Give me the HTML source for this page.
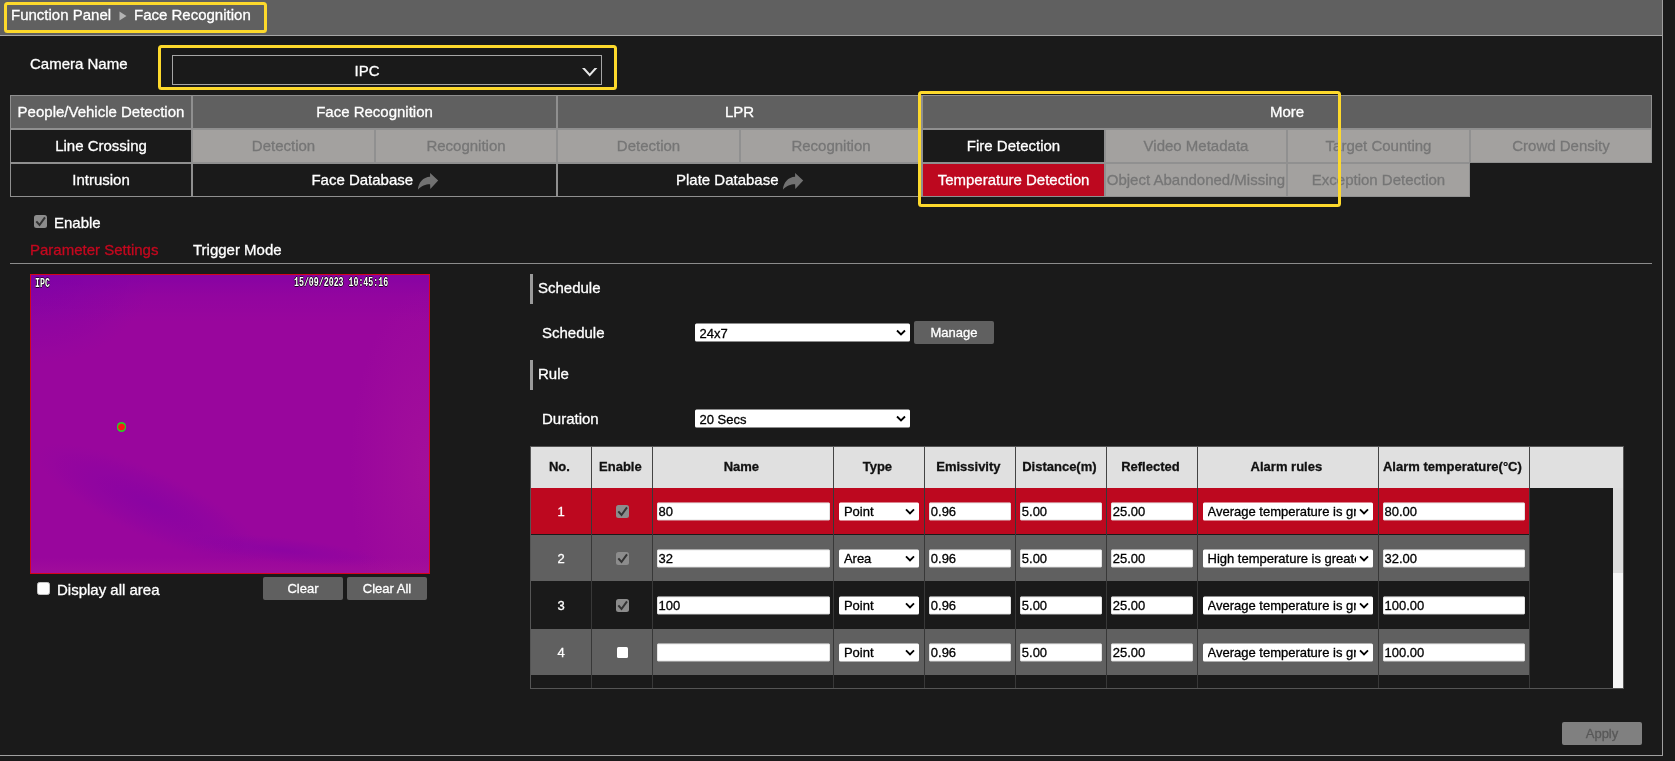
<!DOCTYPE html>
<html lang="en">
<head>
<meta charset="utf-8">
<title>Face Recognition - Temperature Detection</title>
<style>
*{box-sizing:border-box;margin:0;padding:0}
html,body{width:1675px;height:761px;overflow:hidden;background:#1a1a1a}
#root{position:absolute;left:0;top:0;width:1675px;height:761px;will-change:transform}
body{font-family:"Liberation Sans",Arial,sans-serif;font-size:15px;color:#fff;position:relative;-webkit-text-stroke:0.3px currentColor}
.abs{position:absolute}
#frame{position:absolute;left:0;top:0;width:1663px;height:756px;border-right:1px solid #a0a0a0;border-bottom:1px solid #a0a0a0}
#topbar{position:absolute;left:0;top:0;width:1662px;height:36px;background:#606060;border-bottom:1px solid #a6a6a6}
.hl{position:absolute;border:3px solid #fdd92c;border-radius:3.5px;pointer-events:none}
.t{position:absolute;white-space:nowrap;line-height:18px}
.cell{position:absolute;height:34px;border:1px solid #8f8f8f;text-align:center;line-height:32px;white-space:nowrap;overflow:hidden;font-size:15px}
.arr{position:absolute;left:224.3px;top:8px}
.hd{background:#606060;color:#fff}
.dk{background:#1a1a1a;color:#fff}
.ds{background:#a3a19f;color:#767676;border-color:#909090}
.sel{background:#bd081f;color:#fff}
.btn{position:absolute;height:23px;width:80px;background:#606060;color:#fff;font-size:13px;line-height:23px;text-align:center;border-radius:2px}
.cb{position:absolute;width:13px;height:13px;border-radius:2.5px}
.cb.on{background:#8c8c8c}
.cb svg{display:block}
.cb.off{background:#fff;border:1px solid #c4c4c4}
.secbar{position:absolute;width:3px;height:30px;background:#9a9a9a}
.selbox{position:absolute;height:18px;background:#fff;border-radius:1.5px;color:#000;font-size:13px;line-height:19px;padding-left:4.5px;white-space:nowrap;overflow:hidden}
.selbox svg{position:absolute;right:4px;top:6px}
.inp{position:absolute;height:18px;background:#fff;border:1px solid #e4e4e4;border-radius:1px;color:#000;font-size:13px;line-height:17px;padding-left:0.5px;white-space:nowrap;overflow:hidden}

.rh{position:absolute;background:#e0e0e0}
.rht{position:absolute;top:0;height:41px;line-height:39px;transform:translateX(-1.6px);text-align:center;color:#111;font-weight:bold;font-size:13px;white-space:nowrap}
.vs{position:absolute;width:1px;background:#383838}
.rr{position:absolute;left:0;width:998px}
.rr .inp,.rr .selbox{transform:translateY(.45px)}
.r1{background:#bd081f}.r2{background:#606060}.r3{background:#1a1a1a}
.rn{position:absolute;top:1px;height:46px;line-height:46px;text-align:center;font-size:13px;color:#fff}
.cb.off2{background:#fff;width:11px;height:11px;border-radius:1.5px}
.clip{display:block;width:148px;overflow:hidden;white-space:nowrap}
.osd{font-family:"Liberation Mono",monospace;font-weight:bold;font-size:13px;line-height:14px;color:#fff;white-space:pre;transform-origin:0 0;transform:scaleX(.635);-webkit-text-stroke:0;text-shadow:-1px 0 rgba(0,0,0,.75),1px 0 rgba(0,0,0,.75),0 -1px rgba(0,0,0,.6),0 1px rgba(0,0,0,.75)}
</style>
</head>
<body>
<div id="root">
<div id="frame"></div>
<div id="topbar"></div>
<div class="t" style="left:11px;top:6px">Function Panel</div>
<svg class="abs" style="left:118.5px;top:10.5px" width="8" height="10" viewBox="0 0 8 10"><path d="M0.5 0.5 L7.5 5 L0.5 9.5 Z" fill="#b4b4b4"/></svg>
<div class="t" style="left:134px;top:6px">Face Recognition</div>

<div class="t" style="left:30px;top:55px">Camera Name</div>
<div class="abs" style="left:172px;top:55px;width:430px;height:30px;border:1px solid #a6a6a6;text-align:center;line-height:29px;font-size:15px;padding-right:40px">IPC</div>
<svg class="abs" style="left:581.8px;top:67.8px" width="16" height="9" viewBox="0 0 16 9"><path d="M0 0 L2.8 0 L7.7 5.5 L12.6 0 L15.4 0 L7.7 8.6 Z" fill="#e8e8e8"/></svg>

<!-- tab grid -->
<div id="tabs">
<div class="cell hd" style="left:10px;top:95px;width:182px">People/Vehicle Detection</div>
<div class="cell hd" style="left:192px;top:95px;width:365px">Face Recognition</div>
<div class="cell hd" style="left:557px;top:95px;width:365px">LPR</div>
<div class="cell hd" style="left:922px;top:95px;width:730px">More</div>

<div class="cell dk" style="left:10px;top:129px;width:182px">Line Crossing</div>
<div class="cell ds" style="left:192px;top:129px;width:183px">Detection</div>
<div class="cell ds" style="left:375px;top:129px;width:182px">Recognition</div>
<div class="cell ds" style="left:557px;top:129px;width:183px">Detection</div>
<div class="cell ds" style="left:740px;top:129px;width:182px">Recognition</div>
<div class="cell dk" style="left:922px;top:129px;width:183px">Fire Detection</div>
<div class="cell ds" style="left:1105px;top:129px;width:182px">Video Metadata</div>
<div class="cell ds" style="left:1287px;top:129px;width:183px">Target Counting</div>
<div class="cell ds" style="left:1470px;top:129px;width:182px">Crowd Density</div>

<div class="cell dk" style="left:10px;top:163px;width:182px">Intrusion</div>
<div class="cell dk" style="left:192px;top:163px;width:365px;padding-right:24.5px">Face Database<svg class="arr" width="22" height="19" viewBox="0 0 22 19"><path d="M13.1 1.1 L21.2 8.6 L13.3 17 L13.1 12.3 C9 12.2 4.5 13.5 0.9 17.8 C1.5 10.5 6 5.2 13.1 4.8 Z" fill="#727272"/></svg></div>
<div class="cell dk" style="left:557px;top:163px;width:365px;padding-right:24.5px">Plate Database<svg class="arr" width="22" height="19" viewBox="0 0 22 19"><path d="M13.1 1.1 L21.2 8.6 L13.3 17 L13.1 12.3 C9 12.2 4.5 13.5 0.9 17.8 C1.5 10.5 6 5.2 13.1 4.8 Z" fill="#727272"/></svg></div>
<div class="cell sel" style="left:922px;top:163px;width:183px">Temperature Detection</div>
<div class="cell ds" style="left:1105px;top:163px;width:182px">Object Abandoned/Missing</div>
<div class="cell ds" style="left:1287px;top:163px;width:183px">Exception Detection</div>
</div>

<!-- enable / sub tabs -->
<div class="cb on" style="left:34px;top:215px"><svg width="13" height="13" viewBox="0 0 13 13"><path d="M2.3 6.3 L5.5 10 L11 2.3" fill="none" stroke="#333" stroke-width="2"/></svg></div>
<div class="t" style="left:54px;top:214px">Enable</div>
<div class="t" style="left:30px;top:241px;color:#c4081f">Parameter Settings</div>
<div class="t" style="left:193px;top:241px">Trigger Mode</div>
<div class="abs" style="left:10px;top:263px;width:1642px;height:1px;background:#8c8c8c"></div>

<!-- video -->
<div class="abs" id="video" style="left:30px;top:274px;width:400px;height:300px;border:1px solid #d4061c;background:#99069d;overflow:hidden">
  <div class="abs" style="left:0;top:0;width:398px;height:298px;background:
    linear-gradient(to bottom,rgba(120,0,168,.55) 0%,rgba(120,0,168,.2) 7%,rgba(120,0,168,0) 16%),
    radial-gradient(ellipse 30% 30% at 0% 0%,rgba(110,0,175,.45) 0%,rgba(110,0,175,0) 100%),
    radial-gradient(ellipse 20% 62% at 100% 66%,rgba(180,30,150,.38) 0%,rgba(180,30,150,0) 100%),
    linear-gradient(to top,rgba(175,25,150,.35) 0%,rgba(175,25,150,0) 5%)"></div>
  <div class="abs" style="left:-6px;top:196px;width:250px;height:66px;transform:rotate(25deg);background:radial-gradient(ellipse closest-side,rgba(118,0,170,.42) 0%,rgba(118,0,170,.22) 55%,rgba(118,0,170,0) 100%)"></div>
  <div class="abs" style="left:150px;top:262px;width:200px;height:26px;transform:rotate(6deg);background:radial-gradient(ellipse closest-side,rgba(118,0,170,.35) 0%,rgba(118,0,170,0) 100%)"></div>
  <div class="abs osd" style="left:4px;top:2px">IPC</div>
  <div class="abs osd" style="left:263px;top:1px">15/09/2023 10:45:16</div>
  <div class="abs" style="left:85.5px;top:147px;width:9.6px;height:9.6px;border-radius:50%;background:radial-gradient(circle closest-side,#ff1414 0%,#ff1414 66%,#22d422 84%,#22d422 100%)"></div>
</div>
<div class="cb off" style="left:37px;top:582px"></div>
<div class="t" style="left:57px;top:581px">Display all area</div>
<div class="btn" style="left:263px;top:577px">Clear</div>
<div class="btn" style="left:347px;top:577px">Clear All</div>

<!-- right panel -->
<div class="secbar" style="left:530px;top:274px"></div>
<div class="t" style="left:538px;top:279px">Schedule</div>
<div class="t" style="left:542px;top:324px">Schedule</div>
<div class="selbox" style="left:695px;top:323px;width:215px;transform:translateY(.5px)">24x7<svg width="10" height="7" viewBox="0 0 10 7"><path d="M1 1 L5 5 L9 1" fill="none" stroke="#000" stroke-width="1.8"/></svg></div>
<div class="btn" style="left:914px;top:321px">Manage</div>
<div class="secbar" style="left:530px;top:360px"></div>
<div class="t" style="left:538px;top:365px">Rule</div>
<div class="t" style="left:542px;top:410px">Duration</div>
<div class="selbox" style="left:695px;top:409px;width:215px;transform:translateY(.5px)">20 Secs<svg width="10" height="7" viewBox="0 0 10 7"><path d="M1 1 L5 5 L9 1" fill="none" stroke="#000" stroke-width="1.8"/></svg></div>

<!-- rule table placeholder -->
<div id="rules" style="position:absolute;left:530px;top:446px;width:1094px;height:243px;border:1px solid #555;overflow:hidden">
<div class="rh" style="left:0;top:0;width:1093px;height:41px"></div>
<div class="rht" style="left:0px;width:60px">No.</div>
<div class="rht" style="left:61px;width:60px">Enable</div>
<div class="rht" style="left:122px;width:180px">Name</div>
<div class="rht" style="left:303px;width:90px">Type</div>
<div class="rht" style="left:394px;width:90px">Emissivity</div>
<div class="rht" style="left:485px;width:90px">Distance(m)</div>
<div class="rht" style="left:576px;width:90px">Reflected</div>
<div class="rht" style="left:667px;width:180px">Alarm rules</div>
<div class="rht" style="left:848px;width:150px">Alarm temperature(°C)</div>
<div class="vs" style="left:60px;top:0;height:41px;background:#444"></div>
<div class="vs" style="left:121px;top:0;height:41px;background:#444"></div>
<div class="vs" style="left:302px;top:0;height:41px;background:#444"></div>
<div class="vs" style="left:393px;top:0;height:41px;background:#444"></div>
<div class="vs" style="left:484px;top:0;height:41px;background:#444"></div>
<div class="vs" style="left:575px;top:0;height:41px;background:#444"></div>
<div class="vs" style="left:666px;top:0;height:41px;background:#444"></div>
<div class="vs" style="left:847px;top:0;height:41px;background:#444"></div>
<div class="vs" style="left:998px;top:0;height:41px;background:#444"></div>
<div class="rr r1" style="top:41px;height:46px">
<div class="rn" style="left:0;width:60px">1</div>
<div class="cb on" style="left:85px;top:17px"><svg width="13" height="13" viewBox="0 0 13 13"><path d="M2.3 6.3 L5.5 10 L11 2.3" fill="none" stroke="#333" stroke-width="2"/></svg></div>
<div class="inp" style="left:126px;top:14px;width:172.6px">80</div>
<div class="selbox" style="left:308.4px;top:14px;width:79.2px">Point<svg width="10" height="7" viewBox="0 0 10 7"><path d="M1 1 L5 5 L9 1" fill="none" stroke="#000" stroke-width="1.8"/></svg></div>
<div class="inp" style="left:398.29999999999995px;top:14px;width:81.4px">0.96</div>
<div class="inp" style="left:489.29999999999995px;top:14px;width:81.4px">5.00</div>
<div class="inp" style="left:580.3px;top:14px;width:81.4px">25.00</div>
<div class="selbox" style="left:672px;top:14px;width:170px"><span class="clip">Average temperature is gr</span><svg width="10" height="7" viewBox="0 0 10 7"><path d="M1 1 L5 5 L9 1" fill="none" stroke="#000" stroke-width="1.8"/></svg></div>
<div class="inp" style="left:852px;top:14px;width:142px">80.00</div>
<div class="vs" style="left:60px;top:0;height:47px"></div>
<div class="vs" style="left:121px;top:0;height:47px"></div>
<div class="vs" style="left:302px;top:0;height:47px"></div>
<div class="vs" style="left:393px;top:0;height:47px"></div>
<div class="vs" style="left:484px;top:0;height:47px"></div>
<div class="vs" style="left:575px;top:0;height:47px"></div>
<div class="vs" style="left:666px;top:0;height:47px"></div>
<div class="vs" style="left:847px;top:0;height:47px"></div>
<div class="vs" style="left:998px;top:0;height:47px"></div>
</div>
<div class="rr r2" style="top:88px;height:46px">
<div class="rn" style="left:0;width:60px">2</div>
<div class="cb on" style="left:85px;top:17px"><svg width="13" height="13" viewBox="0 0 13 13"><path d="M2.3 6.3 L5.5 10 L11 2.3" fill="none" stroke="#333" stroke-width="2"/></svg></div>
<div class="inp" style="left:126px;top:14px;width:172.6px">32</div>
<div class="selbox" style="left:308.4px;top:14px;width:79.2px">Area<svg width="10" height="7" viewBox="0 0 10 7"><path d="M1 1 L5 5 L9 1" fill="none" stroke="#000" stroke-width="1.8"/></svg></div>
<div class="inp" style="left:398.29999999999995px;top:14px;width:81.4px">0.96</div>
<div class="inp" style="left:489.29999999999995px;top:14px;width:81.4px">5.00</div>
<div class="inp" style="left:580.3px;top:14px;width:81.4px">25.00</div>
<div class="selbox" style="left:672px;top:14px;width:170px"><span class="clip">High temperature is greate</span><svg width="10" height="7" viewBox="0 0 10 7"><path d="M1 1 L5 5 L9 1" fill="none" stroke="#000" stroke-width="1.8"/></svg></div>
<div class="inp" style="left:852px;top:14px;width:142px">32.00</div>
<div class="vs" style="left:60px;top:0;height:47px"></div>
<div class="vs" style="left:121px;top:0;height:47px"></div>
<div class="vs" style="left:302px;top:0;height:47px"></div>
<div class="vs" style="left:393px;top:0;height:47px"></div>
<div class="vs" style="left:484px;top:0;height:47px"></div>
<div class="vs" style="left:575px;top:0;height:47px"></div>
<div class="vs" style="left:666px;top:0;height:47px"></div>
<div class="vs" style="left:847px;top:0;height:47px"></div>
<div class="vs" style="left:998px;top:0;height:47px"></div>
</div>
<div class="rr r3" style="top:135px;height:46px">
<div class="rn" style="left:0;width:60px">3</div>
<div class="cb on" style="left:85px;top:17px"><svg width="13" height="13" viewBox="0 0 13 13"><path d="M2.3 6.3 L5.5 10 L11 2.3" fill="none" stroke="#333" stroke-width="2"/></svg></div>
<div class="inp" style="left:126px;top:14px;width:172.6px">100</div>
<div class="selbox" style="left:308.4px;top:14px;width:79.2px">Point<svg width="10" height="7" viewBox="0 0 10 7"><path d="M1 1 L5 5 L9 1" fill="none" stroke="#000" stroke-width="1.8"/></svg></div>
<div class="inp" style="left:398.29999999999995px;top:14px;width:81.4px">0.96</div>
<div class="inp" style="left:489.29999999999995px;top:14px;width:81.4px">5.00</div>
<div class="inp" style="left:580.3px;top:14px;width:81.4px">25.00</div>
<div class="selbox" style="left:672px;top:14px;width:170px"><span class="clip">Average temperature is gr</span><svg width="10" height="7" viewBox="0 0 10 7"><path d="M1 1 L5 5 L9 1" fill="none" stroke="#000" stroke-width="1.8"/></svg></div>
<div class="inp" style="left:852px;top:14px;width:142px">100.00</div>
<div class="vs" style="left:60px;top:0;height:47px"></div>
<div class="vs" style="left:121px;top:0;height:47px"></div>
<div class="vs" style="left:302px;top:0;height:47px"></div>
<div class="vs" style="left:393px;top:0;height:47px"></div>
<div class="vs" style="left:484px;top:0;height:47px"></div>
<div class="vs" style="left:575px;top:0;height:47px"></div>
<div class="vs" style="left:666px;top:0;height:47px"></div>
<div class="vs" style="left:847px;top:0;height:47px"></div>
<div class="vs" style="left:998px;top:0;height:47px"></div>
</div>
<div class="rr r2" style="top:182px;height:46px">
<div class="rn" style="left:0;width:60px">4</div>
<div class="cb off2" style="left:86px;top:17.5px"></div>
<div class="inp" style="left:126px;top:14px;width:172.6px"></div>
<div class="selbox" style="left:308.4px;top:14px;width:79.2px">Point<svg width="10" height="7" viewBox="0 0 10 7"><path d="M1 1 L5 5 L9 1" fill="none" stroke="#000" stroke-width="1.8"/></svg></div>
<div class="inp" style="left:398.29999999999995px;top:14px;width:81.4px">0.96</div>
<div class="inp" style="left:489.29999999999995px;top:14px;width:81.4px">5.00</div>
<div class="inp" style="left:580.3px;top:14px;width:81.4px">25.00</div>
<div class="selbox" style="left:672px;top:14px;width:170px"><span class="clip">Average temperature is gr</span><svg width="10" height="7" viewBox="0 0 10 7"><path d="M1 1 L5 5 L9 1" fill="none" stroke="#000" stroke-width="1.8"/></svg></div>
<div class="inp" style="left:852px;top:14px;width:142px">100.00</div>
<div class="vs" style="left:60px;top:0;height:47px"></div>
<div class="vs" style="left:121px;top:0;height:47px"></div>
<div class="vs" style="left:302px;top:0;height:47px"></div>
<div class="vs" style="left:393px;top:0;height:47px"></div>
<div class="vs" style="left:484px;top:0;height:47px"></div>
<div class="vs" style="left:575px;top:0;height:47px"></div>
<div class="vs" style="left:666px;top:0;height:47px"></div>
<div class="vs" style="left:847px;top:0;height:47px"></div>
<div class="vs" style="left:998px;top:0;height:47px"></div>
</div>
<div class="rr r3" style="top:229px;height:12px">
<div class="vs" style="left:60px;top:0;height:13px"></div>
<div class="vs" style="left:121px;top:0;height:13px"></div>
<div class="vs" style="left:302px;top:0;height:13px"></div>
<div class="vs" style="left:393px;top:0;height:13px"></div>
<div class="vs" style="left:484px;top:0;height:13px"></div>
<div class="vs" style="left:575px;top:0;height:13px"></div>
<div class="vs" style="left:666px;top:0;height:13px"></div>
<div class="vs" style="left:847px;top:0;height:13px"></div>
<div class="vs" style="left:998px;top:0;height:13px"></div>
</div>
<div style="position:absolute;left:1082px;top:41px;width:11px;height:200px;background:#f5f5f5"></div>
<div style="position:absolute;left:1082px;top:41px;width:11px;height:85px;background:#dddddd"></div>
</div><!--/rules-->

<div class="abs" style="left:1562px;top:722px;width:80px;height:23px;background:#808080;color:#585858;border-radius:2px;text-align:center;line-height:23px;font-size:13px">Apply</div>

<!-- highlight annotations -->
<div class="hl" style="left:4px;top:2px;width:263px;height:31px"></div>
<div class="hl" style="left:158px;top:45px;width:459px;height:45px"></div>
<div class="hl" style="left:918px;top:91px;width:423px;height:116px"></div>
</div>
</body>
</html>
